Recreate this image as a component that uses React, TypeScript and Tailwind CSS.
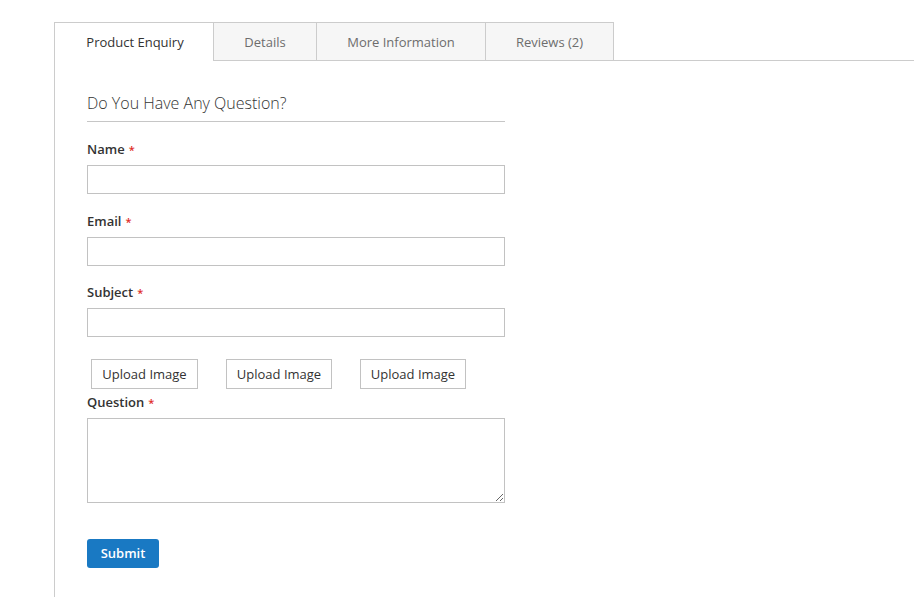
import React from "react";

const Label = ({ text, className = "" }: { text: string; className?: string }) => (
  <div className={"h-[18px] leading-[18px] text-[13px] font-semibold text-[#333] " + className}>
    {text}
    <span className="ml-[4px] text-[11px] text-[#e02b27]">*</span>
  </div>
);

const UploadBtn = ({ w }: { w: string }) => (
  <button
    className={
      "h-[30px] border border-[#c2c2c2] bg-white text-[13px] text-[#333] leading-none flex items-center justify-center " + w
    }
  >
    Upload Image
  </button>
);

export default function App() {
  return (
    <div
      className="min-h-[597px] w-[914px] bg-white pl-[54px] pt-[22px] overflow-hidden"
      style={{ fontFamily: '"Open Sans", "Liberation Sans", sans-serif' }}
    >
      <div className="border-l border-[#cccccc] min-h-[575px]">
        <div className="flex h-[39px]">
          <div className="w-[158px] h-[39px] border-t border-[#cccccc] bg-white flex items-center justify-center text-[13px] text-[#333] pt-[2px] pl-[2px]">
            Product Enquiry
          </div>
          <div className="w-[103px] h-[39px] border-t border-l border-b border-[#cccccc] bg-[#f6f6f6] flex items-center justify-center text-[13px] text-[#6d6d6d] pt-[2px]">
            Details
          </div>
          <div className="w-[169px] h-[39px] border-t border-l border-b border-[#cccccc] bg-[#f6f6f6] flex items-center justify-center text-[13px] text-[#6d6d6d] pt-[2px]">
            More Information
          </div>
          <div className="w-[129px] h-[39px] border-t border-l border-r border-b border-[#cccccc] bg-[#f6f6f6] flex items-center justify-center text-[13px] text-[#6d6d6d] pt-[2px]">
            Reviews (2)
          </div>
          <div className="flex-1 h-[39px] border-b border-[#cccccc]" />
        </div>
        <div className="pl-[32px] w-[450px]">
          <div className="pt-[31px] pb-[7px] border-b border-[#c6c6c6] text-[16px] leading-[22px] font-light text-[#333]">
            Do You Have Any Question?
          </div>
          <Label text="Name" className="mt-[18px]" />
          <input className="block mt-[7px] w-[418px] h-[29px] border border-[#c2c2c2] outline-none" />
          <Label text="Email" className="mt-[18px]" />
          <input className="block mt-[7px] w-[418px] h-[29px] border border-[#c2c2c2] outline-none" />
          <Label text="Subject" className="mt-[17px]" />
          <input className="block mt-[7px] w-[418px] h-[29px] border border-[#c2c2c2] outline-none" />
          <div className="flex mt-[22px] pl-[4px] gap-[28px]">
            <UploadBtn w="w-[107px]" />
            <UploadBtn w="w-[106px]" />
            <UploadBtn w="w-[106px]" />
          </div>
          <Label text="Question" className="mt-[4px]" />
          <textarea className="block mt-[7px] w-[418px] h-[85px] border border-[#c2c2c2] outline-none" />
          <button className="mt-[36px] w-[72px] h-[29px] rounded-[3px] bg-[#1979c3] text-white text-[13px] font-semibold flex items-center justify-center">
            Submit
          </button>
        </div>
      </div>
    </div>
  );
}
